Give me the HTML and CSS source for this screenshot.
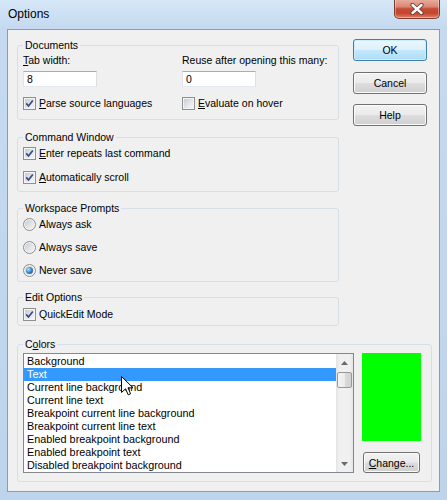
FILE: index.html
```html
<!DOCTYPE html>
<html lang="en">
<head>
  <meta charset="UTF-8">
  <title>Options</title>
  <link rel="stylesheet" href="styles.css">
</head>
<body>
  <div class="window">
    <div class="titlebar">
      <span class="title">Options</span>
      <div class="close">
        <svg width="14" height="12" viewBox="0 0 14 12">
          <path d="M2.5 2 11.5 10M11.5 2 2.5 10" stroke="#6b3a32" stroke-width="4.2" stroke-linecap="round"/>
          <path d="M2.5 2 11.5 10M11.5 2 2.5 10" stroke="#ffffff" stroke-width="2.4" stroke-linecap="round"/>
        </svg>
      </div>
    </div>

    <div class="client">
      <div class="top-row">
        <div class="groups">
          <fieldset class="group docs">
            <legend>Documents</legend>
            <div class="docs-cols">
              <div class="field">
                <div class="label"><u>T</u>ab width:</div>
                <input type="text" value="8">
                <div class="option">
                  <span class="cb"><svg width="9" height="9" viewBox="0 0 9 9"><path d="M1.2 4.4 3.5 7 7.8 1.5" fill="none" stroke="#354a86" stroke-width="1.7"/></svg></span>
                  <span><u>P</u>arse source languages</span>
                </div>
              </div>
              <div class="field">
                <div class="label">Reuse after opening this many:</div>
                <input type="text" value="0">
                <div class="option">
                  <span class="cb"></span>
                  <span><u>E</u>valuate on hover</span>
                </div>
              </div>
            </div>
          </fieldset>

          <fieldset class="group cmd">
            <legend>Command Window</legend>
            <div class="option">
              <span class="cb"><svg width="9" height="9" viewBox="0 0 9 9"><path d="M1.2 4.4 3.5 7 7.8 1.5" fill="none" stroke="#354a86" stroke-width="1.7"/></svg></span>
              <span><u>E</u>nter repeats last command</span>
            </div>
            <div class="option">
              <span class="cb"><svg width="9" height="9" viewBox="0 0 9 9"><path d="M1.2 4.4 3.5 7 7.8 1.5" fill="none" stroke="#354a86" stroke-width="1.7"/></svg></span>
              <span><u>A</u>utomatically scroll</span>
            </div>
          </fieldset>

          <fieldset class="group prompts">
            <legend>Workspace Prompts</legend>
            <div class="option">
              <span class="rb"></span>
              <span>Always ask</span>
            </div>
            <div class="option">
              <span class="rb"></span>
              <span>Always save</span>
            </div>
            <div class="option">
              <span class="rb"><span class="dot"></span></span>
              <span>Never save</span>
            </div>
          </fieldset>

          <fieldset class="group edit">
            <legend>Edit Options</legend>
            <div class="option">
              <span class="cb"><svg width="9" height="9" viewBox="0 0 9 9"><path d="M1.2 4.4 3.5 7 7.8 1.5" fill="none" stroke="#354a86" stroke-width="1.7"/></svg></span>
              <span>QuickEdit Mode</span>
            </div>
          </fieldset>
        </div>

        <div class="buttons">
          <button class="btn default">OK</button>
          <button class="btn">Cancel</button>
          <button class="btn">Help</button>
        </div>
      </div>

      <fieldset class="group colors">
        <legend>C<u>o</u>lors</legend>
        <div class="colors-row">
          <div class="listbox">
            <div class="items">
              <div class="item">Background</div>
              <div class="item selected">Text</div>
              <div class="item">Current line background</div>
              <div class="item">Current line text</div>
              <div class="item">Breakpoint current line background</div>
              <div class="item">Breakpoint current line text</div>
              <div class="item">Enabled breakpoint background</div>
              <div class="item">Enabled breakpoint text</div>
              <div class="item">Disabled breakpoint background</div>
            </div>
            <div class="scrollbar">
              <div class="arrow"><svg width="7" height="4" viewBox="0 0 7 4"><path d="M0 4 3.5 0 7 4Z" fill="#6a6a6a"/></svg></div>
              <div class="thumb"></div>
              <div class="track"></div>
              <div class="arrow"><svg width="7" height="4" viewBox="0 0 7 4"><path d="M0 0 3.5 4 7 0Z" fill="#6a6a6a"/></svg></div>
            </div>
            <svg class="cursor" width="13" height="20" viewBox="0 0 13 20">
              <path d="M0.5 0.5 0.5 16.5 4.5 12.8 7.2 18.8 9.6 17.8 7 11.8 12 11.8Z" fill="#ffffff" stroke="#000000" stroke-width="1"/>
            </svg>
          </div>
          <div class="swatch-col">
            <div class="swatch"></div>
            <button class="btn change"><u>C</u>hange...</button>
          </div>
        </div>
      </fieldset>
    </div>
  </div>
</body>
</html>
```

FILE: styles.css
```css
body {
  margin: 0;
  font-family: "Liberation Sans", Arial, sans-serif;
  font-size: 10.5px;
  color: #000000;
}
.window {
  width: 447px;
  height: 500px;
  overflow: hidden;
  background: linear-gradient(180deg, #d6e7f8 0, #c5daf0 28px, #bdd4ec 100%);
}
.titlebar {
  height: 29px;
  display: flex;
  justify-content: space-between;
  align-items: flex-start;
}
.title {
  font-size: 12px;
  line-height: 15px;
  padding: 7px 0 0 8px;
}
.close {
  width: 46px;
  height: 20px;
  margin: -1px 7px 0 0;
  box-sizing: border-box;
  border: 1px solid #7b3b30;
  border-top: none;
  border-radius: 0 0 5px 5px;
  background: linear-gradient(180deg, #eab0a2 0%, #d98873 40%, #c74a33 52%, #c4452d 75%, #e0826a 100%);
  box-shadow: inset 0 0 0 1px rgba(255, 255, 255, 0.35);
  display: flex;
  align-items: center;
  justify-content: center;
}
.client {
  margin: 0 7px;
  height: 463px;
  box-sizing: border-box;
  border: 1px solid #8a9cb3;
  background-color: #f0f0f0;
  padding: 9px 0 0 9px;
}
.top-row {
  display: flex;
  align-items: flex-start;
}
.groups {
  width: 322px;
}
.group {
  box-sizing: border-box;
  margin: 0;
  min-width: 0;
  border: 1px solid #d5dfe5;
  border-radius: 3px;
}
.group legend {
  padding: 0 2px;
  line-height: 13px;
}
.docs {
  padding: 2px 5px 9px 5px;
}
.cmd {
  margin-top: 11px;
  padding: 3px 5px 7px 5px;
}
.cmd .option + .option {
  margin-top: 11px;
}
.prompts {
  margin-top: 10px;
  padding: 3px 5px 4px 5px;
}
.prompts .option + .option {
  margin-top: 10px;
}
.edit {
  margin-top: 9px;
  padding: 4px 5px 4px 5px;
}
.docs-cols {
  display: flex;
}
.field {
  flex: none;
  width: 159px;
}
.field + .field {
  flex: 1;
  width: auto;
}
.label {
  line-height: 13px;
  white-space: nowrap;
}
.field input {
  display: block;
  box-sizing: border-box;
  width: 74px;
  height: 16px;
  margin: 4px 0 0 0;
  padding: 0 3px;
  border: 1px solid;
  border-color: #abadb3 #dbdfe6 #e3e9ef #e2e3ea;
  background-color: #ffffff;
  font-family: "Liberation Sans", Arial, sans-serif;
  font-size: 10.5px;
  color: #000000;
  outline: none;
}
.field .option {
  margin-top: 10px;
}
.option {
  display: flex;
  align-items: center;
  height: 13px;
  line-height: 13px;
  gap: 3px;
}
.cb {
  width: 13px;
  height: 13px;
  box-sizing: border-box;
  border: 1px solid #8e8f8f;
  background: linear-gradient(135deg, #c3c8cf 0%, #e7e9ec 60%, #f6f6f6 100%);
  box-shadow: inset 0 0 0 1px #f4f4f4;
  display: flex;
  align-items: center;
  justify-content: center;
}
.rb {
  width: 13px;
  height: 13px;
  box-sizing: border-box;
  border: 1px solid #8e8f8f;
  border-radius: 50%;
  background: linear-gradient(135deg, #c0c5cc 0%, #e5e7ea 60%, #f7f7f7 100%);
  box-shadow: inset 0 0 0 1px #f4f4f4;
  display: flex;
  align-items: center;
  justify-content: center;
}
.dot {
  width: 7px;
  height: 7px;
  border-radius: 50%;
  background: radial-gradient(circle at 35% 35%, #b7e6ff 0%, #3d8ad0 45%, #173f77 100%);
}
.buttons {
  margin-left: 14px;
  width: 74px;
  display: flex;
  flex-direction: column;
}
.btn {
  box-sizing: border-box;
  height: 22px;
  padding: 0;
  border: 1px solid #707070;
  border-radius: 3px;
  background: linear-gradient(180deg, #f2f2f2 0%, #ebebeb 48%, #dddddd 52%, #cfcfcf 100%);
  box-shadow: inset 0 0 0 1px #fbfbfb;
  font-family: "Liberation Sans", Arial, sans-serif;
  font-size: 10.5px;
  color: #000000;
}
.buttons .btn + .btn {
  margin-top: 10px;
}
.buttons .btn.default + .btn {
  margin-top: 11px;
}
.btn.default {
  border-color: #3c7fb1;
  background: linear-gradient(180deg, #ecf7fd 0%, #ddf1fc 48%, #c4e8fc 52%, #aedcf6 100%);
  box-shadow: inset 0 0 0 1px #cdeefd;
}
.colors {
  width: 415px;
  margin-top: 12px;
  padding: 2px 5px 8px 5px;
}
.colors-row {
  display: flex;
  align-items: flex-start;
}
.listbox {
  position: relative;
  width: 331px;
  height: 120px;
  box-sizing: border-box;
  border: 1px solid #828790;
  background-color: #ffffff;
  display: flex;
}
.items {
  flex: 1;
  overflow: hidden;
  padding-top: 1px;
}
.item {
  height: 13px;
  line-height: 13px;
  padding-left: 3px;
  white-space: nowrap;
  font-size: 10.8px;
}
.item.selected {
  background-color: #3399ff;
  color: #ffffff;
}
.scrollbar {
  width: 17px;
  display: flex;
  flex-direction: column;
  background: linear-gradient(90deg, #e3e3e3 0%, #f0f0f0 20%, #f0f0f0 80%, #e6e6e6 100%);
}
.arrow {
  height: 17px;
  display: flex;
  align-items: center;
  justify-content: center;
}
.thumb {
  height: 16px;
  margin: 1px 1px 0 1px;
  box-sizing: border-box;
  border: 1px solid #979797;
  border-radius: 2px;
  background: linear-gradient(90deg, #f4f4f4 0%, #ececec 50%, #dadada 51%, #d2d2d2 100%);
}
.track {
  flex: 1;
}
.cursor {
  position: absolute;
  left: 97px;
  top: 22px;
}
.swatch-col {
  margin-left: 8px;
  display: flex;
  flex-direction: column;
}
.swatch {
  width: 59px;
  height: 88px;
  background-color: #00ff00;
}
.btn.change {
  width: 57px;
  height: 21px;
  margin: 11px 0 0 1px;
}
```
